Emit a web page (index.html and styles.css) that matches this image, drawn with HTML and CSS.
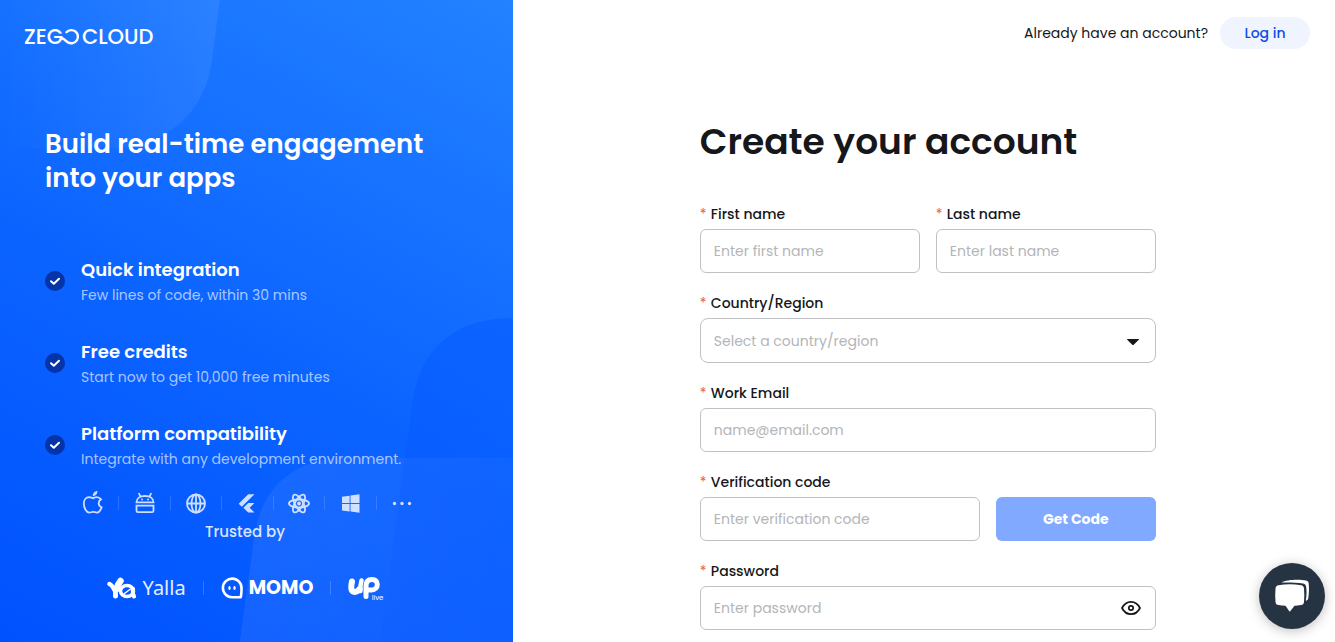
FILE: index.html
```html
<!DOCTYPE html>
<html lang="en">
<head>
  <meta charset="UTF-8">
  <meta name="viewport" content="width=device-width, initial-scale=1.0">
  <title>ZEGOCLOUD</title>
  <link rel="stylesheet" href="styles.css">
</head>
<body>
  <div class="page">
    <aside class="side">
      <svg class="side-bg" viewBox="0 0 513 642" preserveAspectRatio="none" aria-hidden="true">
        <defs>
          <linearGradient id="g1" x1="0" y1="0" x2="1" y2="0">
            <stop offset="0" stop-color="#fff" stop-opacity="0"/>
            <stop offset="1" stop-color="#fff" stop-opacity=".07"/>
          </linearGradient>
          <linearGradient id="g2" x1="0" y1="0" x2="0" y2="1">
            <stop offset="0" stop-color="#0052ff" stop-opacity=".38"/>
            <stop offset="1" stop-color="#0052ff" stop-opacity=".2"/>
          </linearGradient>
          <linearGradient id="g3" x1="0" y1="0" x2="1" y2="0">
            <stop offset="0" stop-color="#fff" stop-opacity=".07"/>
            <stop offset="1" stop-color="#fff" stop-opacity=".03"/>
          </linearGradient>
        </defs>
        <path fill="url(#g1)" d="M0 0H220L212 60C206 112 166 148 110 148H0Z"/>
        <path fill="url(#g2)" d="M513 318C456 318 421 348 413 400L380 642H513Z"/>
        <path fill="url(#g3)" d="M513 458H346C292 458 260 490 254 540L240 642H513Z"/>
      </svg>
      <a class="logo" href="#" aria-label="ZEGOCLOUD">
        <span>ZEG</span>
        <svg width="15" height="16" viewBox="0 0 15 16"><path d="M1.500 3.200A6.600 6.600 0 1 1 3 13.400C1.200 12.200-.5 10.500-2.500 9.400"/></svg>
        <span>CLOUD</span>
      </a>
      <div class="intro">
        <h2>Build real-time engagement<br>into your apps</h2>
        <ul class="features">
          <li>
            <svg class="tick" viewBox="0 0 20 20"><circle cx="10" cy="10" r="10"/><path d="M6 10.2l2.8 2.6 5.2-5"/></svg>
            <div><h3>Quick integration</h3><p>Few lines of code, within 30 mins</p></div>
          </li>
          <li>
            <svg class="tick" viewBox="0 0 20 20"><circle cx="10" cy="10" r="10"/><path d="M6 10.2l2.8 2.6 5.2-5"/></svg>
            <div><h3>Free credits</h3><p>Start now to get 10,000 free minutes</p></div>
          </li>
          <li>
            <svg class="tick" viewBox="0 0 20 20"><circle cx="10" cy="10" r="10"/><path d="M6 10.2l2.8 2.6 5.2-5"/></svg>
            <div><h3>Platform compatibility</h3><p>Integrate with any development environment.</p></div>
          </li>
        </ul>
        <div class="platforms">
          <!-- apple -->
          <svg viewBox="0 0 24 24"><path class="line" d="M12 7.2C10.6 6.7 9.6 6.2 8 6.2 5 6.3 2.8 8.800 2.800 12.600c0 4.200 2.600 9 5.600 9 1.400 0 2-.8 3.600-.8s2.300.8 3.700.8c2.100 0 4-2.700 4.900-5.200-1.900-.9-2.900-2.400-2.900-4.200 0-1.700.9-3 2.300-3.800-1.200-1.500-2.700-2.200-4.300-2.200-1.500 0-2.400.5-3.700.8z"/><path class="fill" d="M11.800 5.100C11.700 2.200 13.800 0 16.400 0c.2 2.900-1.900 5.100-4.600 5.100z"/></svg>
          <i></i>
          <!-- android -->
          <svg viewBox="0 0 24 24"><path class="line" d="M3.500 11.300C3.500 7.500 7 5 12 5s8.500 2.500 8.500 6.300zM3.500 14.700h17v5a1.500 1.500 0 0 1-1.500 1.500H5a1.500 1.500 0 0 1-1.500-1.500zM7.500 5.800L5.800 2M16.500 5.800L18.200 2"/><circle class="fill" cx="9" cy="8.500" r="1"/><circle class="fill" cx="15" cy="8.500" r="1"/></svg>
          <i></i>
          <!-- web -->
          <svg viewBox="0 0 24 24"><g class="line"><circle cx="12" cy="12.500" r="9"/><ellipse cx="12" cy="12.500" rx="4.500" ry="9"/><path d="M3 12.500h18M12 3.500v18"/></g></svg>
          <i></i>
          <!-- flutter -->
          <svg viewBox="0 0 24 24"><path class="fill" d="M12.200 3.300h6.300L5.800 15.800l-3.100-3.100zM12.200 12h6.300l-4.800 4.800 4.800 4.800h-6.300l-4.800-4.800z"/></svg>
          <i></i>
          <!-- react -->
          <svg viewBox="0 0 24 24"><g class="line"><ellipse cx="12" cy="12.500" rx="10" ry="4"/><ellipse cx="12" cy="12.500" rx="10" ry="4" transform="rotate(60 12 12.500)"/><ellipse cx="12" cy="12.500" rx="10" ry="4" transform="rotate(120 12 12.500)"/></g><circle class="fill" cx="12" cy="12.500" r="2"/></svg>
          <i></i>
          <!-- windows -->
          <svg viewBox="0 0 24 24"><path class="fill" d="M3 5.700l7.600-1v7.400H3zM11.500 4.600L20.500 3.300v8.800h-9zM3 13h7.600v7.400L3 19.400zM11.500 13h9v8.800l-9-1.300z"/></svg>
          <i></i>
          <svg viewBox="0 0 24 24"><g class="fill"><circle cx="4.500" cy="12.500" r="1.700"/><circle cx="12" cy="12.500" r="1.700"/><circle cx="19.500" cy="12.500" r="1.700"/></g></svg>
        </div>
        <p class="trusted">Trusted by</p>
        <div class="brands">
          <div class="brand yalla">
            <svg width="30" height="22" viewBox="0 0 30 22"><g fill="none" stroke="#fff" stroke-linecap="round"><path stroke-width="4.500" d="M2.500 7C5 8 6 10 7.500 13"/><path stroke-width="6.500" d="M13.500 4C11 7 10 10 9.500 12"/><path stroke-width="5" d="M10 10C8.500 13 8 16 8.500 19"/><ellipse stroke-width="3.500" cx="20" cy="14" rx="6.500" ry="5.500"/><path stroke-width="4" d="M26 12c-.5 3 0 5.500 1 7.500"/><path stroke-width="1.500" d="M17.500 16.500l6-4.500"/></g></svg>
            <span>Yalla</span>
          </div>
          <i></i>
          <div class="brand momo">
            <svg width="22" height="22" viewBox="0 0 22 22"><path fill="none" stroke="#fff" stroke-width="2.600" stroke-linejoin="round" d="M14.500 20.200h5.200c.6-2 .8-5 .8-8.900A9.300 9.300 0 1 0 11 20.200h5"/><ellipse cx="8.500" cy="11" rx="1.200" ry="2" fill="#fff"/><ellipse cx="13.500" cy="11" rx="1.200" ry="2" fill="#fff"/></svg>
            <span>MOMO</span>
          </div>
          <i></i>
          <div class="brand uplive">
            <svg width="32" height="22" viewBox="0 0 32 22"><g fill="none" stroke="#fff" stroke-linecap="round" stroke-linejoin="round"><path stroke-width="6" d="M4 4.500C3.200 8 3 10 3.500 12.500c.8 3 5.500 3.500 8-.5"/><path stroke-width="4.500" d="M13.500 3.500C12.500 7 12 10 12.500 14"/><path stroke-width="5" d="M18 19.500V9c0-4.500 2.500-6.500 6-6.500s5.300 2 5.300 5-2.300 5.500-5.500 5.500H20"/></g></svg>
            <small>live</small>
          </div>
        </div>
      </div>
    </aside>

    <main class="main">
      <header class="top">
        <span>Already have an account?</span>
        <a class="login" href="#">Log in</a>
      </header>
      <form class="form">
        <h1>Create your account</h1>
        <div class="row">
          <div class="field">
            <label for="first">First name</label>
            <input id="first" type="text" placeholder="Enter first name">
          </div>
          <div class="field">
            <label for="last">Last name</label>
            <input id="last" type="text" placeholder="Enter last name">
          </div>
        </div>
        <div class="field">
          <label for="country">Country/Region</label>
          <div class="control">
            <select id="country">
              <option>Select a country/region</option>
            </select>
            <svg class="caret" width="12" height="6" viewBox="0 0 12 6"><path d="M.5 0h11a.5.5 0 0 1 .3.800L6.700 5.700a1 1 0 0 1-1.400 0L.2.800A.5.500 0 0 1 .5 0z"/></svg>
          </div>
        </div>
        <div class="field">
          <label for="email">Work Email</label>
          <input id="email" type="email" placeholder="name@email.com">
        </div>
        <div class="field">
          <label for="code">Verification code</label>
          <div class="row">
            <input id="code" type="text" placeholder="Enter verification code">
            <button class="get-code" type="button">Get Code</button>
          </div>
        </div>
        <div class="field">
          <label for="password">Password</label>
          <div class="control">
            <input id="password" type="password" placeholder="Enter password">
            <button class="eye" type="button" aria-label="Show password">
              <svg width="20" height="16" viewBox="0 0 20 16"><path d="M1 8c2-4 5.200-6.200 9-6.200S17 4 19 8c-2 4-5.200 6.200-9 6.200S3 12 1 8z"/><circle cx="10" cy="8" r="2.200"/></svg>
            </button>
          </div>
        </div>
      </form>
    </main>
  </div>

  <button class="chat" type="button" aria-label="Open chat">
    <svg width="36" height="34" viewBox="0 0 36 34"><path d="M7.500 3.500C13 .3 26 .2 32 1.500c1.700.4 2.500 1.300 2.700 3 .5 5 .4 10-.5 15-.2 1.200-1.200 2-2.400 2.200.9-5 1-10 .3-14.200-.3-1.800-1.500-2.800-3.200-3C22.500 3.500 14 3.200 7.500 3.500z"/><path d="M4.500 6.200c7-1.200 15.500-1.200 22.500 0 1.800.3 2.800 1.400 3 3.200.4 4.500.4 9 0 13.500-.2 1.800-1.200 2.900-3 3.200-2.200.3-4.300.6-6.500.7l-4.300 5.400c-.3.400-.6.400-.9 0L11.500 26.800c-2.300-.1-4.700-.3-7-.7-1.800-.3-2.800-1.400-3-3.200-.4-4.500-.4-9 0-13.500.2-1.800 1.200-2.900 3-3.200z"/></svg>
  </button>
</body>
</html>
```
FILE: styles.css
```css
* {
  box-sizing: border-box;
}
body {
  margin: 0;
  font-family: Poppins, Inter, "Liberation Sans", sans-serif;
  font-size: 14px;
  color: #15171a;
  background: #fff;
}
h1, h2, h3, p, ul {
  margin: 0;
  padding: 0;
}
a {
  text-decoration: none;
}
.page {
  display: flex;
  height: 100vh;
  overflow: hidden;
}

/* left panel */
.side {
  position: relative;
  flex: 0 0 38.4%;
  padding: 24px 24px 0;
  color: #fff;
  background: linear-gradient(28deg, #0052ff 0%, #0b63ff 45%, #1772ff 72%, #2282ff 100%);
}
.side-bg {
  position: absolute;
  top: 0;
  left: 0;
  width: 100%;
  height: 100%;
}
.logo {
  position: relative;
  display: flex;
  align-items: center;
  gap: 2px;
  color: #fff;
  font-size: 21px;
  font-weight: 500;
  line-height: 26px;
}
.logo svg {
  overflow: visible;
  fill: none;
  stroke: #fff;
  stroke-width: 2.4;
  stroke-linecap: round;
}
.intro {
  position: relative;
  width: 400px;
  margin: 77px 0 0 21px;
}
.intro h2 {
  font-size: 26px;
  font-weight: 600;
  line-height: 34px;
  white-space: nowrap;
}
.features {
  display: flex;
  flex-direction: column;
  gap: 32px;
  margin-top: 61px;
  list-style: none;
}
.features li {
  display: flex;
  align-items: center;
  gap: 16px;
}
.features h3 {
  font-size: 18px;
  font-weight: 600;
  line-height: 28px;
}
.features p {
  font-size: 14px;
  line-height: 22px;
  color: rgba(255, 255, 255, .65);
}
.tick {
  width: 20px;
  height: 20px;
}
.tick circle {
  fill: #0533a8;
}
.tick path {
  fill: none;
  stroke: #fff;
  stroke-width: 2;
  stroke-linecap: round;
  stroke-linejoin: round;
}
.platforms {
  display: flex;
  align-items: center;
  justify-content: space-between;
  margin: 21px 31px 0 36px;
  opacity: .8;
}
.platforms svg {
  width: 24px;
  height: 24px;
}
.platforms .line {
  fill: none;
  stroke: #fff;
  stroke-width: 1.8;
}
.platforms .fill {
  fill: #fff;
}
.platforms i, .brands i {
  width: 1px;
  height: 14px;
  background: rgba(255, 255, 255, .18);
}
.trusted {
  margin-top: 5px;
  font-size: 15px;
  font-weight: 500;
  line-height: 24px;
  text-align: center;
  color: rgba(255, 255, 255, .85);
}
.brands {
  display: flex;
  align-items: center;
  justify-content: center;
  gap: 17px;
  margin-top: 32px;
}
.brand {
  display: flex;
  align-items: center;
  gap: 6px;
  line-height: 24px;
}
.yalla span {
  font-family: "Noto Sans", sans-serif;
  font-size: 20px;
  opacity: .9;
}
.momo span {
  font-size: 19px;
  font-weight: 700;
}
.uplive {
  position: relative;
  width: 35px;
}
.uplive small {
  position: absolute;
  right: 0;
  bottom: -3px;
  font-size: 7px;
  line-height: 8px;
}

/* right side */
.main {
  flex: 1;
}
.top {
  display: flex;
  align-items: center;
  justify-content: flex-end;
  gap: 12px;
  padding: 17px 25px 0 0;
  line-height: 32px;
}
.login {
  width: 90px;
  border-radius: 16px;
  text-align: center;
  font-weight: 500;
  color: #0d4ceb;
  background: #eff4ff;
}
.form {
  box-sizing: content-box;
  width: 456px;
  margin: 66px auto 0;
  padding-left: 8px;
}
.form h1 {
  margin-bottom: 35px;
  font-size: 36px;
  font-weight: 600;
  line-height: 54px;
  white-space: nowrap;
}
.row {
  display: flex;
  gap: 16px;
}
.row > * {
  flex: 1;
  min-width: 0;
}
.field {
  margin-bottom: 20px;
}
.field label {
  display: flex;
  margin-bottom: 5px;
  font-weight: 500;
  line-height: 20px;
}
.field label::before {
  content: "*";
  width: 11px;
  font-weight: 400;
  color: #f0575a;
}
input, select {
  display: block;
  width: 100%;
  height: 44px;
  padding: 1px 13px 0;
  border: 1px solid #bfc1c4;
  border-radius: 6px;
  font: inherit;
  background: #fff;
}
select {
  height: 45px;
  border-radius: 8px;
  color: #b3b5b9;
  appearance: none;
}
input::placeholder {
  color: #b3b5b9;
}
.control {
  position: relative;
}
.caret {
  position: absolute;
  top: 21px;
  right: 17px;
  fill: #15171a;
}
.row .get-code {
  flex: 0 0 160px;
  border: 0;
  border-radius: 6px;
  font: inherit;
  font-weight: 700;
  color: #fff;
  background: #80a9ff;
}
.eye {
  position: absolute;
  top: 14px;
  right: 15px;
  padding: 0;
  border: 0;
  background: none;
}
.eye svg {
  display: block;
  fill: none;
  stroke: #15171a;
  stroke-width: 1.7;
}
.chat {
  position: fixed;
  right: 10px;
  bottom: 13px;
  display: flex;
  align-items: center;
  justify-content: center;
  width: 66px;
  height: 66px;
  padding: 0;
  border: 0;
  border-radius: 50%;
  background: #253342;
  box-shadow: 0 2px 12px rgba(0, 0, 0, .25);
}
.chat svg {
  fill: #fff;
}
```
